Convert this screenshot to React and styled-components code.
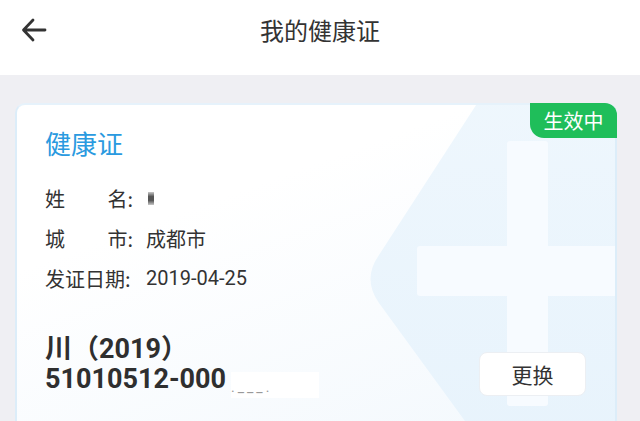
import React from "react";
import styled, { createGlobalStyle } from "styled-components";

const GlobalStyle = createGlobalStyle`
  html, body {
    margin: 0;
    padding: 0;
    background: #efeff3;
    font-family: Roboto, "Noto Sans CJK SC", sans-serif;
    color: #333;
  }
`;

const Header = styled.header`
  height: 75px;
  background: #fff;
  display: flex;
  align-items: center;
  justify-content: center;
  position: relative;
  .back {
    position: absolute;
    left: 20px;
    top: 16px;
  }
  h1 {
    margin: 0 0 16px;
    font-size: 24px;
    font-weight: 400;
    color: #333;
    font-family: "Noto Sans CJK SC", sans-serif;
  }
`;

const Card = styled.section`
  position: relative;
  margin: 28px 23px 0 15px;
  height: 340px;
  border: 2px solid #dcedf9;
  border-top-color: #e6f2fb;
  border-radius: 10px;
  background: linear-gradient(160deg, #ffffff 30%, #f2f8fd 100%);
  padding: 20px 29px 0 28px;
  box-sizing: border-box;
`;

const Deco = styled.svg`
  position: absolute;
  left: 0;
  top: 0;
  width: 100%;
  height: 100%;
  border-radius: 8px;
`;

const Badge = styled.span`
  position: absolute;
  top: -2px;
  right: -2px;
  width: 87px;
  height: 35px;
  background: #1fbe5a;
  color: #fff;
  font-family: "Noto Sans CJK SC", sans-serif;
  font-size: 20px;
  line-height: 35px;
  text-align: center;
  border-radius: 0 12px 0 14px;
`;

const Content = styled.div`
  position: relative;
`;

const Title = styled.h2`
  margin: 0 0 17px;
  font-size: 26px;
  line-height: 36px;
  font-weight: 400;
  color: #2a9ae0;
  font-family: "Noto Sans CJK SC", sans-serif;
`;

const Row = styled.div`
  display: flex;
  align-items: center;
  height: 40px;
  font-size: 20px;
`;

const Label = styled.span`
  width: 88px;
  margin-right: 13px;
  display: flex;
  justify-content: space-between;
  font-family: "Noto Sans CJK SC", sans-serif;
`;

const NameMask = styled.span`
  display: inline-flex;
  align-items: center;
  width: 40px;
  height: 24px;
  background: #fff;
  padding-left: 2px;
  box-sizing: border-box;
  i {
    width: 6px;
    height: 13px;
    background: linear-gradient(#c8c8c8, #555 35%, #555 65%, #c8c8c8);
  }
`;

const Bottom = styled.div`
  display: flex;
  align-items: flex-end;
  justify-content: space-between;
  margin-top: 36px;
`;

const Number = styled.div`
  font-size: 27px;
  font-weight: 700;
  line-height: 30px;
  color: #2f2f2f;
`;

const NumMask = styled.span`
  display: inline-block;
  width: 88px;
  height: 26px;
  margin-left: 5px;
  vertical-align: -4px;
  background: #fff;
  font-size: 14px;
  font-weight: 400;
  line-height: 30px;
  color: #999;
  letter-spacing: 3px;
`;

const Button = styled.button`
  width: 107px;
  height: 44px;
  margin-bottom: 2px;
  border: 1px solid #eceff3;
  border-radius: 8px;
  background: #fff;
  font-family: "Noto Sans CJK SC", sans-serif;
  font-size: 21px;
  color: #333;
  padding: 0;
`;

const rows = [
  { label: ["姓", "名:"], value: <NameMask><i /></NameMask> },
  { label: ["城", "市:"], value: "成都市" },
  { label: ["发证日期:"], value: "2019-04-25" },
];

export default function App() {
  return (
    <>
      <GlobalStyle />
      <Header>
        <svg className="back" width="28" height="28" viewBox="0 0 28 28" fill="none">
          <path
            d="M25 14H4M13 4 3.5 14 13 24"
            stroke="#333"
            strokeWidth="2.8"
            strokeLinecap="round"
            strokeLinejoin="round"
          />
        </svg>
        <h1>我的健康证</h1>
      </Header>

      <Card>
        <Deco>
          <defs>
            <linearGradient id="diamond" x1="0" y1="0" x2="0" y2="1">
              <stop offset="0" stopColor="#eff7fd" />
              <stop offset="1" stopColor="#e7f3fc" />
            </linearGradient>
          </defs>
          <path
            d="M485 -40 L362 150 Q345 174 362 198 L480 360 L640 360 L640 -40 Z"
            fill="url(#diamond)"
          />
          <rect x="490" y="36" width="41" height="265" rx="3" fill="#f7fbff" />
          <rect x="400" y="141" width="220" height="50" rx="3" fill="#f7fbff" />
        </Deco>
        <Badge>生效中</Badge>

        <Content>
          <Title>健康证</Title>
          {rows.map((r) => (
            <Row key={r.label.join("")}>
              <Label>
                {r.label.map((t) => (
                  <span key={t}>{t}</span>
                ))}
              </Label>
              {r.value}
            </Row>
          ))}

          <Bottom>
            <Number>
              <div>川（2019）</div>
              <div>
                51010512-000
                <NumMask>.___.</NumMask>
              </div>
            </Number>
            <Button>更换</Button>
          </Bottom>
        </Content>
      </Card>
    </>
  );
}
